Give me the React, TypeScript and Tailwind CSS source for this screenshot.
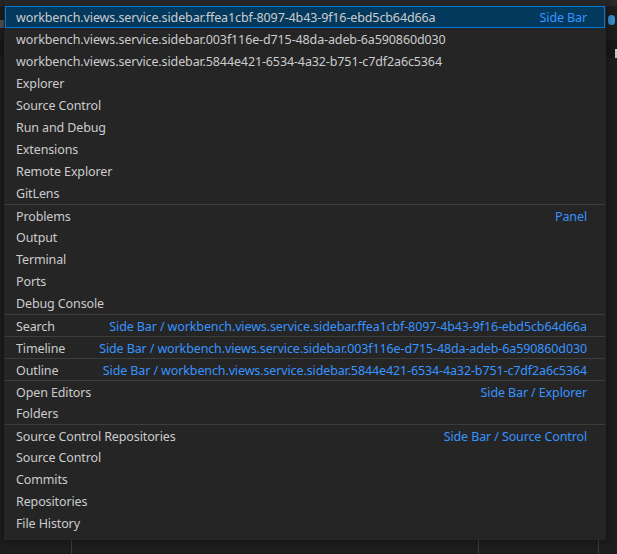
import React from 'react'

type Row = { label: string; desc?: string; sep?: boolean; active?: boolean }

const rows: Row[] = [
  { label: 'workbench.views.service.sidebar.ffea1cbf-8097-4b43-9f16-ebd5cb64d66a', desc: 'Side Bar', active: true },
  { label: 'workbench.views.service.sidebar.003f116e-d715-48da-adeb-6a590860d030' },
  { label: 'workbench.views.service.sidebar.5844e421-6534-4a32-b751-c7df2a6c5364' },
  { label: 'Explorer' },
  { label: 'Source Control' },
  { label: 'Run and Debug' },
  { label: 'Extensions' },
  { label: 'Remote Explorer' },
  { label: 'GitLens' },
  { label: 'Problems', desc: 'Panel', sep: true },
  { label: 'Output' },
  { label: 'Terminal' },
  { label: 'Ports' },
  { label: 'Debug Console' },
  { label: 'Search', desc: 'Side Bar / workbench.views.service.sidebar.ffea1cbf-8097-4b43-9f16-ebd5cb64d66a', sep: true },
  { label: 'Timeline', desc: 'Side Bar / workbench.views.service.sidebar.003f116e-d715-48da-adeb-6a590860d030', sep: true },
  { label: 'Outline', desc: 'Side Bar / workbench.views.service.sidebar.5844e421-6534-4a32-b751-c7df2a6c5364', sep: true },
  { label: 'Open Editors', desc: 'Side Bar / Explorer', sep: true },
  { label: 'Folders' },
  { label: 'Source Control Repositories', desc: 'Side Bar / Source Control', sep: true },
  { label: 'Source Control' },
  { label: 'Commits' },
  { label: 'Repositories' },
  { label: 'File History' },
]

function PickRow({ row }: { row: Row }) {
  return (
    <div
      className={
        row.active
          ? 'h-[22px] flex items-center justify-between gap-3 pt-px pl-[10px] pr-[17px] bg-[#04395e] border border-[#0078d4]'
          : row.sep
            ? 'h-[22px] flex items-center justify-between gap-3 pt-[2px] pl-[11px] pr-[18px] border-t border-[#3c3c3c]'
            : 'h-[22px] flex items-center justify-between gap-3 pt-[2px] pl-[11px] pr-[18px]'
      }
    >
      <span className="text-[#cccccc] whitespace-nowrap">{row.label}</span>
      {row.desc && <span className="text-[#3794ff] whitespace-nowrap">{row.desc}</span>}
    </div>
  )
}

export default function App() {
  return (
    <div
      className="relative w-[617px] h-[554px] overflow-hidden bg-[#1e1e1e] text-[12.5px] tracking-[-0.12px] leading-[18px] flex flex-col"
      style={{ fontFamily: '"Noto Sans", sans-serif' }}
    >
      {/* editor chrome peeking out behind the picker */}
      <div className="h-[6px] bg-[#2b2b2b] shrink-0" />
      <div className="flex flex-1">
        <div className="w-[72px] border-r border-[#3c3c3c] flex flex-col">
          <div className="mt-[14px] w-[4px] h-[8px] bg-[#555555]" />
          <div className="mt-[12px] w-[4px] h-[16px] bg-[#181818]" />
        </div>
        <div className="w-[407px] border-r border-[#3c3c3c]" />
        <div className="w-[120px] border-r border-[#3c3c3c]" />
        <div className="flex-1 flex flex-col items-end">
          <div className="mt-[9px] mr-[2px] w-[7px] h-[10px] rounded-sm bg-[#3a8fd0]" />
          <div className="mt-[15px] w-full h-[18px] bg-[#181818] flex justify-end items-end">
            <div className="w-[2px] h-[9px] bg-[#c5c5c5]" />
          </div>
        </div>
      </div>

      <div className="absolute left-[4px] top-0 w-[602px] py-[6px] px-px bg-[#252526] shadow-[0_0_8px_2px_rgba(0,0,0,0.36)]">
        {rows.map((r, i) => (
          <PickRow key={i} row={r} />
        ))}
      </div>
    </div>
  )
}
